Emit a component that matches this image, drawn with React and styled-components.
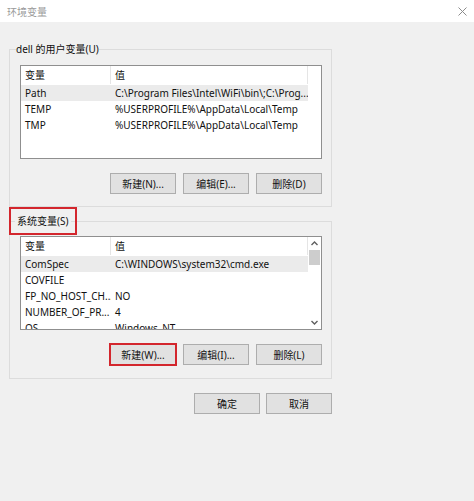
import styled, { createGlobalStyle } from 'styled-components';

const GlobalStyle = createGlobalStyle`
  html, body {
    margin: 0;
    padding: 0;
    background: #f0f0f0;
  }
  * {
    box-sizing: border-box;
  }
`;

const userVars = [
  ['Path', 'C:\\Program Files\\Intel\\WiFi\\bin\\;C:\\Prog...'],
  ['TEMP', '%USERPROFILE%\\AppData\\Local\\Temp'],
  ['TMP', '%USERPROFILE%\\AppData\\Local\\Temp'],
];

const systemVars = [
  ['ComSpec', 'C:\\WINDOWS\\system32\\cmd.exe'],
  ['COVFILE', ''],
  ['FP_NO_HOST_CH...', 'NO'],
  ['NUMBER_OF_PR...', '4'],
  ['OS', 'Windows_NT'],
];

const VarList = ({ rows, scroll }) => (
  <ListView>
    <Table>
      <HeaderRow>
        <HeaderCell>变量</HeaderCell>
        <HeaderCell>值</HeaderCell>
      </HeaderRow>
      {rows.map(([name, value], i) => (
        <Row key={name} $selected={i === 0}>
          <Cell>{name}</Cell>
          <Cell>{value}</Cell>
        </Row>
      ))}
    </Table>
    {scroll && (
      <ScrollBar>
        <ScrollArrow>
          <svg width="13" height="13" viewBox="0 0 13 13">
            <polyline points="3.5,8 6.5,5 9.5,8" fill="none" stroke="#606060" strokeWidth="1.4" />
          </svg>
        </ScrollArrow>
        <Track>
          <Thumb />
        </Track>
        <ScrollArrow>
          <svg width="13" height="13" viewBox="0 0 13 13">
            <polyline points="3.5,5 6.5,8 9.5,5" fill="none" stroke="#606060" strokeWidth="1.4" />
          </svg>
        </ScrollArrow>
      </ScrollBar>
    )}
  </ListView>
);

const App = () => {
  return (
    <Window>
      <GlobalStyle />
      <TitleBar>
        <Title>环境变量</Title>
        <svg width="9" height="9" viewBox="0 0 9 9">
          <path d="M0.5 0.5 L8.5 8.5 M8.5 0.5 L0.5 8.5" stroke="#8c8c8c" strokeWidth="1" />
        </svg>
      </TitleBar>
      <Body>
        <Group>
          <Legend>dell 的用户变量(U)</Legend>
          <GroupContent>
            <VarList rows={userVars} />
            <ButtonRow>
              <Button>新建(N)...</Button>
              <Button>编辑(E)...</Button>
              <Button>删除(D)</Button>
            </ButtonRow>
          </GroupContent>
        </Group>
        <Group $gap={6}>
          <Legend $marked>系统变量(S)</Legend>
          <GroupContent $top={7} $bottom={13}>
            <VarList rows={systemVars} scroll />
            <ButtonRow>
              <Button $marked>新建(W)...</Button>
              <Button>编辑(I)...</Button>
              <Button>删除(L)</Button>
            </ButtonRow>
          </GroupContent>
        </Group>
        <Footer>
          <Button>确定</Button>
          <Button>取消</Button>
        </Footer>
      </Body>
    </Window>
  );
};

export default App;

const Window = styled.div`
  width: 474px;
  height: 501px;
  background: #f0f0f0;
  font-family: 'Noto Sans', 'Noto Sans CJK SC', sans-serif;
  font-size: 10px;
  color: #111;
  overflow: hidden;
`;

const TitleBar = styled.div`
  height: 22px;
  background: #fff;
  display: flex;
  align-items: center;
  justify-content: space-between;
  padding: 0 7px 0 7px;
`;

const Title = styled.span`
  color: #9a9a9a;
  font-size: 10px;
`;

const Body = styled.div`
  padding-left: 9px;
  display: flex;
  flex-direction: column;
`;

const Group = styled.fieldset`
  width: 323px;
  margin: ${(p) => p.$gap ?? 19}px 0 0 0;
  padding: 0;
  min-width: 0;
  border: 1px solid #dcdcdc;
`;

const Legend = styled.legend`
  margin-left: ${(p) => (p.$marked ? 5 : 6)}px;
  padding: ${(p) => (p.$marked ? '0 2px' : '0')};
  line-height: 16px;
  height: 16px;
  outline: ${(p) => (p.$marked ? '2px solid #d3262d' : 'none')};
  outline-offset: 4px;
`;

const GroupContent = styled.div`
  padding: ${(p) => p.$top ?? 8}px 9px ${(p) => p.$bottom ?? 12}px 10px;
  display: flex;
  flex-direction: column;
  gap: 14px;
`;

const ListView = styled.div`
  height: 94px;
  border: 1px solid #8f8f8f;
  background: #fff;
  display: flex;
  overflow: hidden;
`;

const Table = styled.div`
  flex: 1;
`;

const HeaderRow = styled.div`
  display: grid;
  grid-template-columns: 90px 197px;
  height: 18px;
  line-height: 18px;
  margin-bottom: 1px;
`;

const HeaderCell = styled.div`
  padding-left: 4px;
  border-right: 1px solid #e5e5e5;
`;

const Row = styled.div`
  display: grid;
  grid-template-columns: 90px 197px;
  height: 16px;
  line-height: 16px;
  background: ${(p) => (p.$selected ? '#ebebeb' : 'transparent')};
  width: 287px;
`;

const Cell = styled.div`
  padding-left: 4px;
  white-space: nowrap;
  overflow: hidden;
`;

const ScrollBar = styled.div`
  width: 13px;
  margin-right: 1px;
  display: flex;
  flex-direction: column;
  background: #fff;
`;

const ScrollArrow = styled.div`
  height: 13px;
  display: flex;
  align-items: center;
  justify-content: center;
`;

const Track = styled.div`
  flex: 1;
  padding: 0 1px;
`;

const Thumb = styled.div`
  height: 15px;
  background: #cdcdcd;
`;

const ButtonRow = styled.div`
  display: flex;
  justify-content: flex-end;
  gap: 7px;
`;

const Button = styled.button`
  width: 66px;
  height: 21px;
  padding: 0;
  background: #e1e1e1;
  border: 1px solid #adadad;
  border-radius: 0;
  font-family: inherit;
  font-size: 10px;
  color: #111;
  outline: ${(p) => (p.$marked ? '2px solid #d3262d' : 'none')};
  outline-offset: -1px;
`;

const Footer = styled.div`
  width: 323px;
  margin-top: 14px;
  display: flex;
  justify-content: flex-end;
  gap: 6px;
`;
